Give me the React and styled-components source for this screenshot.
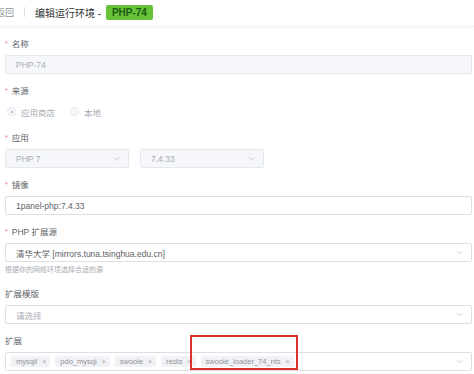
import styled, { createGlobalStyle } from "styled-components";

const GlobalStyle = createGlobalStyle`
  html, body {
    margin: 0;
    padding: 0;
    background: #ffffff;
  }
  body {
    font-family: "Liberation Sans", "Noto Sans CJK SC", sans-serif;
    overflow: hidden;
  }
`;

const Page = styled.div`
  width: 474px;
  height: 374px;
  position: relative;
  overflow: hidden;
`;

const Header = styled.div`
  height: 27px;
  display: flex;
  align-items: center;
  border-bottom: 1px solid #eef0f4;
  box-shadow: 0 1px 2px rgba(0, 0, 0, 0.03);
  padding-bottom: 2px;
  box-sizing: border-box;
`;

const Back = styled.span`
  margin-left: -4px;
  font-size: 9px;
  color: #909399;
`;

const Divider = styled.span`
  width: 1px;
  height: 10px;
  background: #dcdfe6;
  margin: 0 10px;
`;

const Title = styled.span`
  font-size: 10px;
  color: #303133;
  white-space: pre;
`;

const TitleTag = styled.span`
  margin-left: 2px;
  height: 15px;
  padding: 0 6px;
  display: inline-flex;
  align-items: center;
  background: #67c23a;
  border-radius: 2px;
  font-size: 10px;
  font-weight: bold;
  color: #1d5a10;
`;

const Form = styled.div`
  padding: 11px 2px 0 5px;
  display: flex;
  flex-direction: column;
`;

const Item = styled.div`
  display: flex;
  flex-direction: column;
  margin-bottom: ${(p) => p.$mb || 11}px;
`;

const Label = styled.div`
  height: 12px;
  line-height: 12px;
  font-size: 8.5px;
  color: #606266;
  margin-bottom: 5px;
  display: flex;
  align-items: center;
`;

const Star = styled.span`
  color: #f56c6c;
  font-size: 7px;
  margin-right: 4px;
`;

const Field = styled.div`
  height: 19px;
  box-sizing: border-box;
  border: 1px solid ${(p) => (p.$disabled ? "#e4e7ed" : "#dcdfe6")};
  background: ${(p) => (p.$disabled ? "#f5f7fa" : "#ffffff")};
  border-radius: 2px;
  display: flex;
  align-items: center;
  padding: 0 8px 0 10px;
  width: ${(p) => (p.$w ? p.$w + "px" : "auto")};
  font-size: 8.5px;
  color: ${(p) => (p.$muted ? "#a8abb2" : "#606266")};
`;

const FieldText = styled.span`
  flex: 1;
  white-space: nowrap;
  overflow: hidden;
`;

const Row = styled.div`
  display: flex;
  gap: 11px;
`;

const RadioRow = styled.div`
  height: 19px;
  display: flex;
  align-items: center;
  gap: 15px;
  padding-left: 2px;
`;

const Radio = styled.label`
  display: flex;
  align-items: center;
  gap: 5px;
  font-size: 8.5px;
  color: #a8abb2;
`;

const Circle = styled.span`
  width: 7px;
  height: 7px;
  border-radius: 50%;
  border: 1px solid #e4e7ed;
  background: #f5f7fa;
  display: flex;
  align-items: center;
  justify-content: center;
  &::after {
    content: "";
    width: 2px;
    height: 2px;
    border-radius: 50%;
    background: ${(p) => (p.$checked ? "#a8abb2" : "transparent")};
  }
`;

const Help = styled.div`
  margin-top: 3px;
  font-size: 7px;
  line-height: 10px;
  color: #a8abb2;
`;

const Tags = styled.div`
  flex: 1;
  display: flex;
  gap: 5px;
  align-items: center;
  margin-left: -5px;
`;

const Tag = styled.span`
  height: 11px;
  padding: 0 4px 0 5px;
  display: inline-flex;
  align-items: center;
  gap: 5px;
  background: #f0f2f5;
  border-radius: 2px;
  font-size: 7.5px;
  color: #909399;
  white-space: nowrap;
`;

const Close = styled.span`
  font-size: 7px;
  color: #a8abb2;
`;

const Highlight = styled.div`
  position: absolute;
  left: 190px;
  top: 335px;
  width: 108px;
  height: 35px;
  box-sizing: border-box;
  border: 2px solid #d9312b;
`;

function Chevron() {
  return (
    <svg width="7" height="5" viewBox="0 0 10 6" fill="none">
      <path d="M1 1l4 4 4-4" stroke="#c0c4cc" strokeWidth="1.2" />
    </svg>
  );
}

const extensions = ["mysqli", "pdo_mysql", "swoole", "redis", "swoole_loader_74_nts"];

export default function App() {
  return (
    <Page>
      <GlobalStyle />
      <Header>
        <Back>返回</Back>
        <Divider />
        <Title>编辑运行环境 - </Title>
        <TitleTag>PHP-74</TitleTag>
      </Header>
      <Form>
        <Item>
          <Label>
            <Star>*</Star>名称
          </Label>
          <Field $disabled $muted>
            <FieldText>PHP-74</FieldText>
          </Field>
        </Item>
        <Item>
          <Label>
            <Star>*</Star>来源
          </Label>
          <RadioRow>
            <Radio>
              <Circle $checked />
              应用商店
            </Radio>
            <Radio>
              <Circle />
              本地
            </Radio>
          </RadioRow>
        </Item>
        <Item>
          <Label>
            <Star>*</Star>应用
          </Label>
          <Row>
            <Field $disabled $muted $w={124}>
              <FieldText>PHP 7</FieldText>
              <Chevron />
            </Field>
            <Field $disabled $muted $w={124}>
              <FieldText>7.4.33</FieldText>
              <Chevron />
            </Field>
          </Row>
        </Item>
        <Item $mb={11}>
          <Label>
            <Star>*</Star>镜像
          </Label>
          <Field>
            <FieldText>1panel-php:7.4.33</FieldText>
          </Field>
        </Item>
        <Item $mb={13}>
          <Label>
            <Star>*</Star>PHP 扩展源
          </Label>
          <Field>
            <FieldText>清华大学 [mirrors.tuna.tsinghua.edu.cn]</FieldText>
            <Chevron />
          </Field>
          <Help>根据你的网络环境选择合适的源</Help>
        </Item>
        <Item>
          <Label>扩展模版</Label>
          <Field $muted>
            <FieldText>请选择</FieldText>
            <Chevron />
          </Field>
        </Item>
        <Item>
          <Label>扩展</Label>
          <Field>
            <Tags>
              {extensions.map((e) => (
                <Tag key={e}>
                  {e}
                  <Close>×</Close>
                </Tag>
              ))}
            </Tags>
            <Chevron />
          </Field>
        </Item>
      </Form>
      <Highlight />
    </Page>
  );
}
